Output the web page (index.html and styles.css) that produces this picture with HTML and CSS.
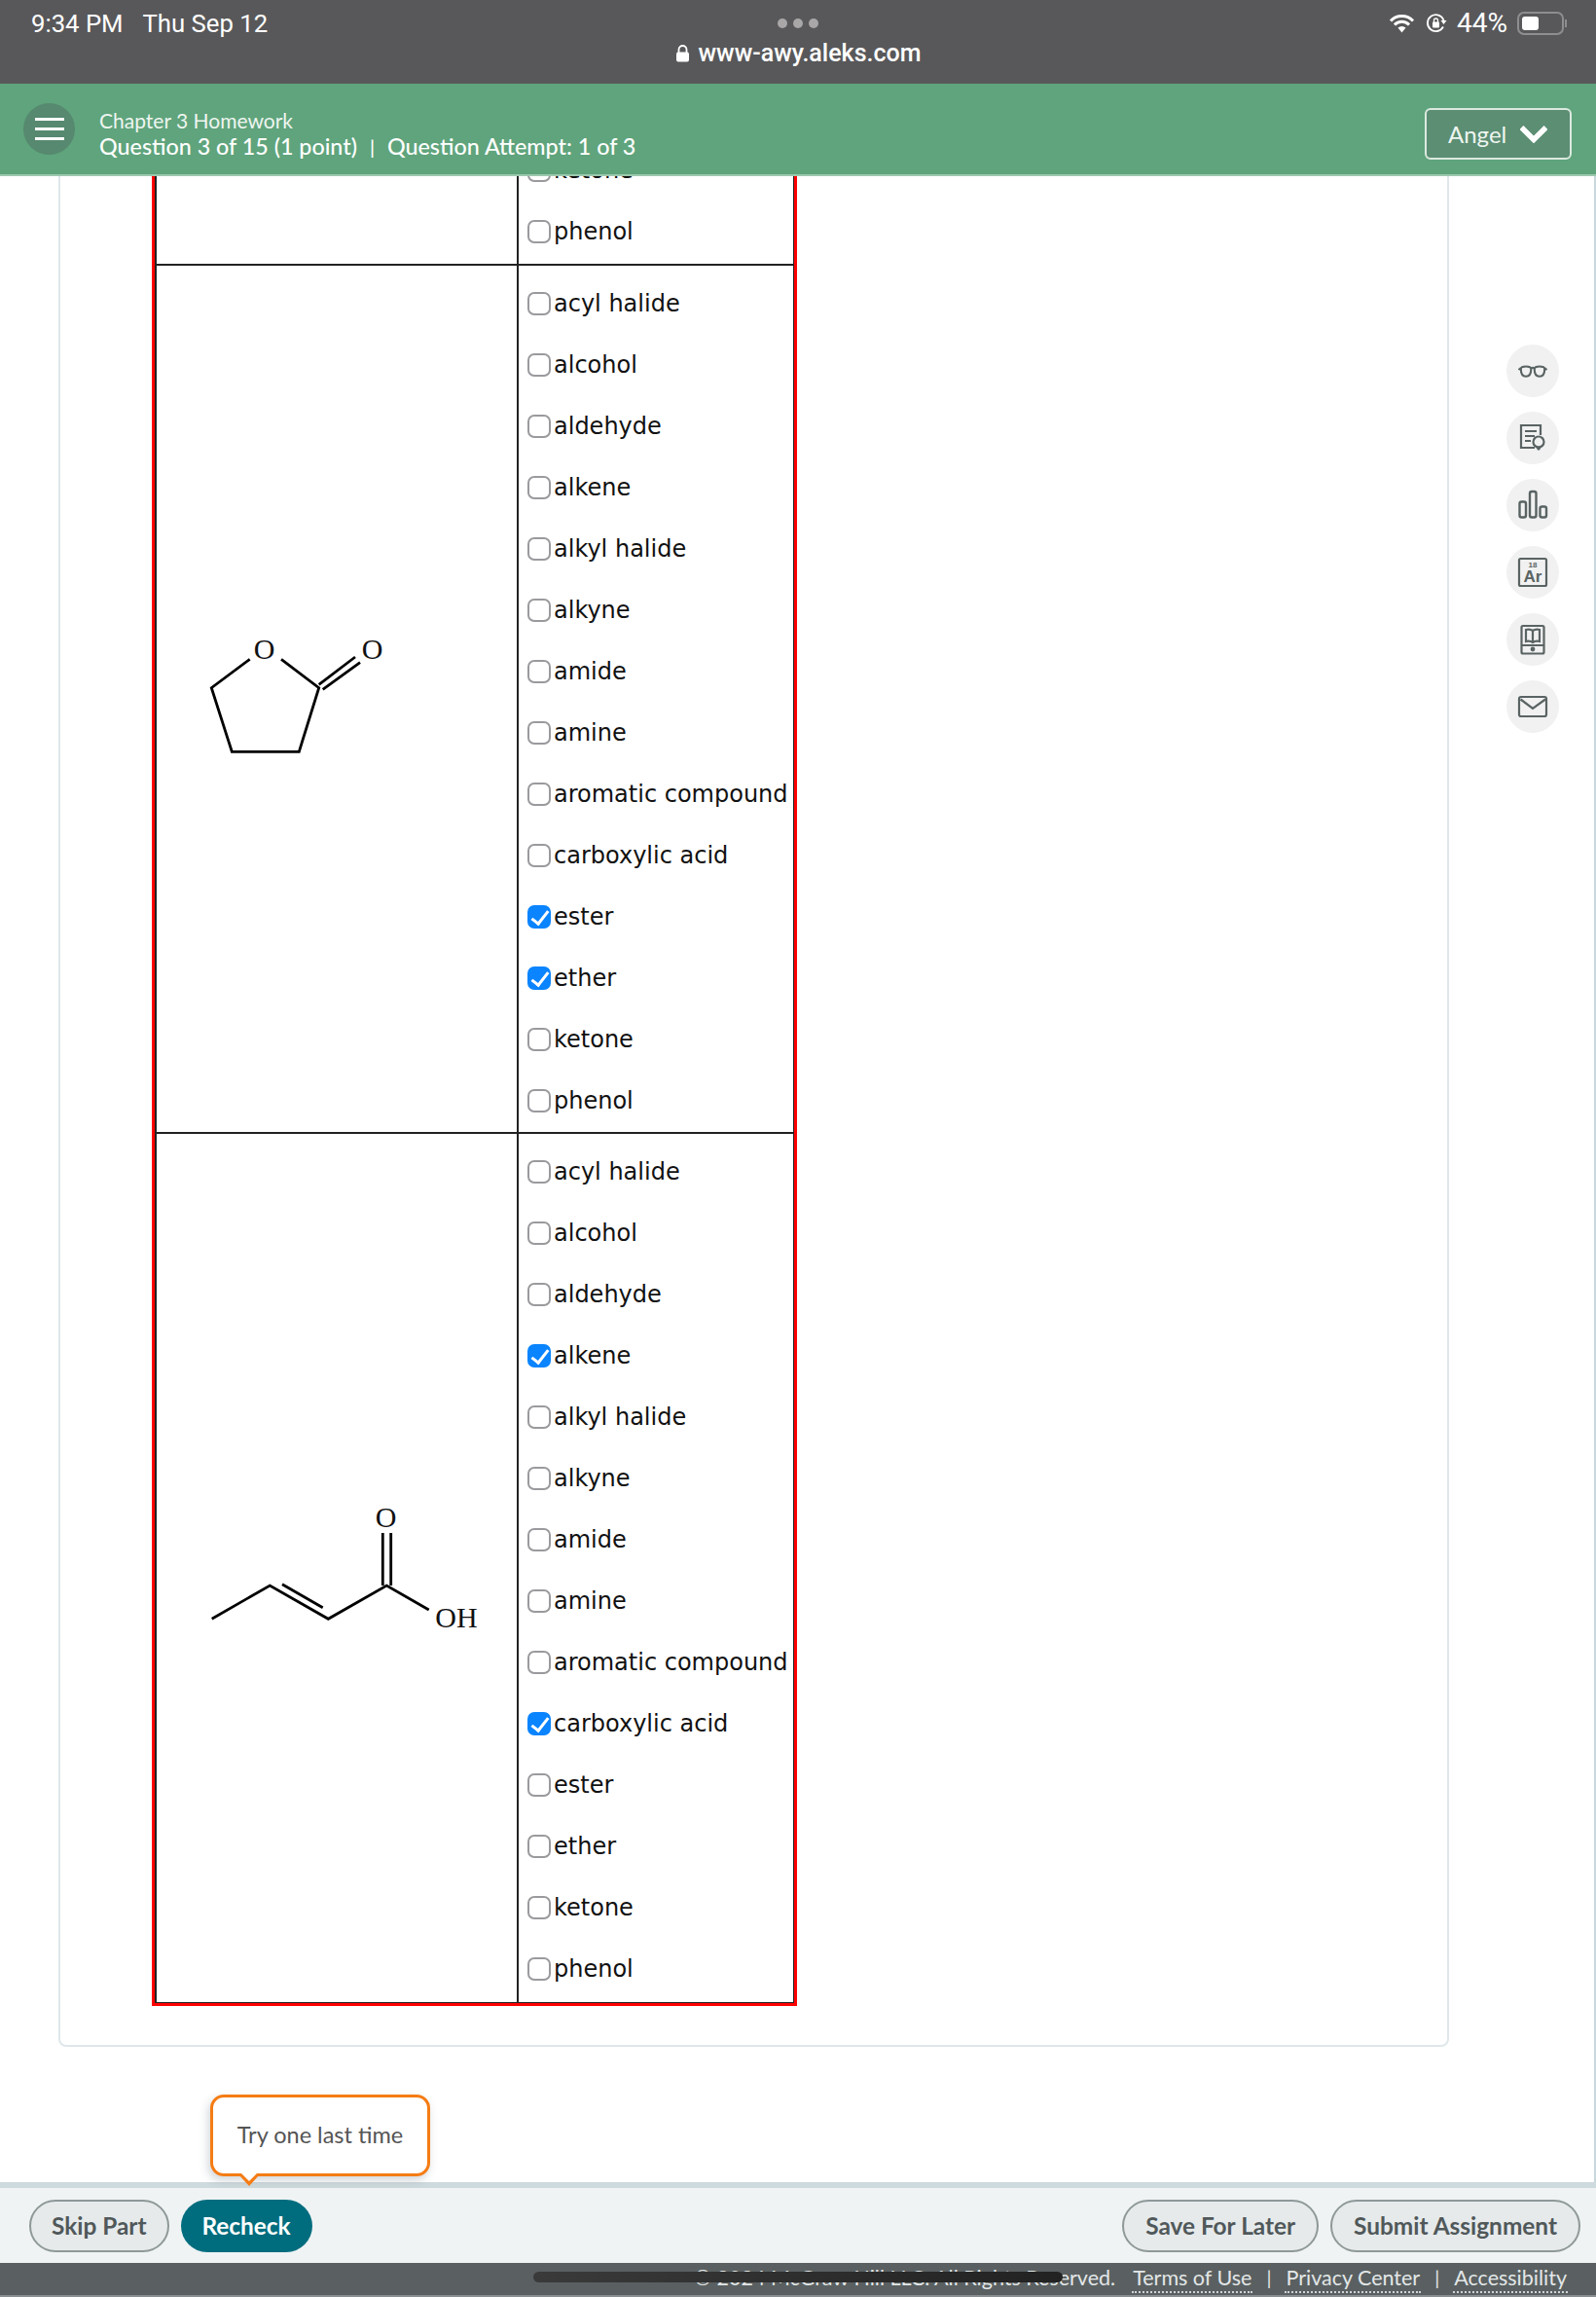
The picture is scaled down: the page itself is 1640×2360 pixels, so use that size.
FILE: index.html
```html
<!DOCTYPE html>
<html lang="en">
<head>
  <meta charset="UTF-8">
  <title>Chapter 3 Homework</title>
  <link rel="stylesheet" href="styles.css">
</head>
<body>
  <!-- Browser status bar -->
  <div class="status-bar">
    <div class="status-left"><span>9:34 PM</span><span>Thu Sep 12</span></div>
    <div class="status-center">
      <div class="dots"><i></i><i></i><i></i></div>
      <div class="url">
        <svg width="15" height="18" viewBox="0 0 15 18"><path d="M3.5 8V5a4 4 0 0 1 8 0v3" fill="none" stroke="#fff" stroke-width="1.8"/><rect x="1" y="7.500" width="13" height="10" rx="2" fill="#fff"/></svg>
        <span>www-awy.aleks.com</span>
      </div>
    </div>
    <div class="status-right">
      <svg width="27" height="21" viewBox="0 0 27 21"><path d="M2 8.500a16 16 0 0 1 23 0M6 12.500a10.500 10.500 0 0 1 15 0" fill="none" stroke="#fff" stroke-width="3"/><path d="M9.500 15.500a6 6 0 0 1 8 0L13.500 20.500z" fill="#fff"/></svg>
      <svg class="rot-lock" width="22" height="22" viewBox="0 0 22 22"><path d="M18 14.500A8.500 8.500 0 1 1 18.500 8" fill="none" stroke="#fff" stroke-width="1.800"/><path d="M15.500 8h6l-3 4z" fill="#fff"/><rect x="7" y="9.500" width="7" height="6" rx="1" fill="#fff"/><path d="M8.500 10V8a2 2 0 0 1 4 0v2" fill="none" stroke="#fff" stroke-width="1.300"/></svg>
      <span class="battery-text">44%</span>
      <div class="battery"><div class="battery-fill"></div></div>
      <div class="battery-nub"></div>
    </div>
  </div>

  <!-- Assignment header -->
  <header class="top-bar">
    <div class="menu-btn"><i></i><i></i><i></i></div>
    <div class="titles">
      <div class="chapter">Chapter 3 Homework</div>
      <div class="question">Question 3 of 15 (1 point)<span class="sep">|</span>Question Attempt: 1 of 3</div>
    </div>
    <div class="user-btn">
      <span>Angel</span>
      <svg width="28" height="18" viewBox="0 0 28 18"><path d="M1.500 2L14 14.500 26.500 2" fill="none" stroke="#fff" stroke-width="5.500"/></svg>
    </div>
  </header>

  <main class="main">
    <div class="card">
      <div class="answers">
        <div class="answers-inner">
          <div class="q-row">
            <div class="q-molecule"></div>
            <div class="q-options">
              <label class="option"><input type="checkbox">ketone</label>
              <label class="option"><input type="checkbox">phenol</label>
            </div>
          </div>

          <div class="q-row">
            <div class="q-molecule">
              <svg class="mol" width="200" height="142" viewBox="0 -6 200 142">
                <path d="M51.700 24.300L12.300 53.700 33.300 119.300H102.300L122.700 53.700 84 24.300M122.700 50.300L160 22M126.700 55.300L165 27.700" fill="none" stroke="#000" stroke-width="2.800"/>
                <text x="66.700" y="23.500" class="atom">O</text>
                <text x="177.700" y="23.500" class="atom">O</text>
              </svg>
            </div>
            <div class="q-options">
              <label class="option"><input type="checkbox">acyl halide</label>
              <label class="option"><input type="checkbox">alcohol</label>
              <label class="option"><input type="checkbox">aldehyde</label>
              <label class="option"><input type="checkbox">alkene</label>
              <label class="option"><input type="checkbox">alkyl halide</label>
              <label class="option"><input type="checkbox">alkyne</label>
              <label class="option"><input type="checkbox">amide</label>
              <label class="option"><input type="checkbox">amine</label>
              <label class="option"><input type="checkbox">aromatic compound</label>
              <label class="option"><input type="checkbox">carboxylic acid</label>
              <label class="option"><input type="checkbox" checked>ester</label>
              <label class="option"><input type="checkbox" checked>ether</label>
              <label class="option"><input type="checkbox">ketone</label>
              <label class="option"><input type="checkbox">phenol</label>
            </div>
          </div>

          <div class="q-row">
            <div class="q-molecule">
              <svg class="mol" width="300" height="142" viewBox="0 -6 300 142">
                <path d="M12.700 117.300L72.300 83 132.300 117.300 192.300 83 235.700 108M85 81.700L126.700 105.700M188.300 83V29M196.700 83V29" fill="none" stroke="#000" stroke-width="2.800"/>
                <text x="191.700" y="23" class="atom">O</text>
                <text x="264" y="126" class="atom">OH</text>
              </svg>
            </div>
            <div class="q-options">
              <label class="option"><input type="checkbox">acyl halide</label>
              <label class="option"><input type="checkbox">alcohol</label>
              <label class="option"><input type="checkbox">aldehyde</label>
              <label class="option"><input type="checkbox" checked>alkene</label>
              <label class="option"><input type="checkbox">alkyl halide</label>
              <label class="option"><input type="checkbox">alkyne</label>
              <label class="option"><input type="checkbox">amide</label>
              <label class="option"><input type="checkbox">amine</label>
              <label class="option"><input type="checkbox">aromatic compound</label>
              <label class="option"><input type="checkbox" checked>carboxylic acid</label>
              <label class="option"><input type="checkbox">ester</label>
              <label class="option"><input type="checkbox">ether</label>
              <label class="option"><input type="checkbox">ketone</label>
              <label class="option"><input type="checkbox">phenol</label>
            </div>
          </div>
        </div>
      </div>
    </div>

    <!-- Side tools -->
    <aside class="tools">
      <div class="tool">
        <svg width="54" height="54" viewBox="0 0 54 54"><g fill="none" stroke="#5a6363" stroke-width="2.100"><path d="M14.800 25Q15 22.500 20 22.500T25.300 25C25.300 30 23.500 32.700 20 32.700S14.800 30 14.800 25zM28.700 25Q29 22.500 34 22.500T39.200 25C39.200 30 37.500 32.700 34 32.700S28.700 30 28.700 25z"/><path d="M25.300 24.500Q27 23 28.700 24.500M14.800 24L12.500 26M39.200 24L41.500 26"/></g></svg>
      </div>
      <div class="tool">
        <svg width="54" height="54" viewBox="0 0 54 54"><g fill="none" stroke="#5a6363" stroke-width="2.200"><path d="M29 37H15V14H35V24"/><path d="M19 20H31M19 25H29M19 30H25"/><circle cx="33" cy="31" r="5.500"/></g><path d="M30 35.500h6l-2 4h-2z" fill="#5a6363"/></svg>
      </div>
      <div class="tool">
        <svg width="54" height="54" viewBox="0 0 54 54"><g fill="none" stroke="#5a6363" stroke-width="2.400"><rect x="13.500" y="23.500" width="6.500" height="16" rx="2"/><rect x="24" y="13" width="6.500" height="26.500" rx="2"/><rect x="34.500" y="28.500" width="6.500" height="11" rx="2"/></g></svg>
      </div>
      <div class="tool">
        <svg width="54" height="54" viewBox="0 0 54 54"><rect x="13" y="13" width="28" height="28" rx="1.500" fill="none" stroke="#5a6363" stroke-width="2.200"/><text x="27" y="22" class="el-num">18</text><text x="27" y="37" class="el-sym">Ar</text></svg>
      </div>
      <div class="tool">
        <svg width="54" height="54" viewBox="0 0 54 54"><g fill="none" stroke="#5a6363" stroke-width="2.200"><rect x="15.500" y="13" width="23" height="28.500" rx="1.500"/><path d="M15.500 33H38.500M27 18q-3-2-7-1V29q4-1 7 1q3-2 7-1V17q-4-1-7 1zM27 18V30"/><circle cx="27" cy="37" r="1.300"/></g></svg>
      </div>
      <div class="tool">
        <svg width="54" height="54" viewBox="0 0 54 54"><g fill="none" stroke="#5a6363" stroke-width="2.200"><rect x="13" y="17" width="28" height="20" rx="2"/><path d="M14.500 19.500L27 29 40 19.500"/></g></svg>
      </div>
    </aside>
  </main>

  <div class="tooltip">Try one last time</div>

  <!-- Action buttons -->
  <div class="actions">
    <button class="pill skip">Skip Part</button>
    <button class="pill recheck">Recheck</button>
    <div class="spacer"></div>
    <button class="pill save">Save For Later</button>
    <button class="pill submit">Submit Assignment</button>
  </div>

  <footer class="legal">
    <span class="copy">© 2024 McGraw Hill LLC. All Rights Reserved.</span>
    <a class="legal-link">Terms of Use</a>
    <span class="bar">|</span>
    <a class="legal-link">Privacy Center</a>
    <span class="bar">|</span>
    <a class="legal-link">Accessibility</a>
  </footer>
  <div class="home-pill"></div>
</body>
</html>
```
FILE: styles.css
```css
* {
  box-sizing: border-box;
}

html, body {
  margin: 0;
  height: 2360px;
  overflow: hidden;
}

body {
  position: relative;
  display: flex;
  flex-direction: column;
  font-family: Lato, "Open Sans", sans-serif;
  background: #fff;
}

/* status bar */
.status-bar {
  height: 86px;
  flex: none;
  display: grid;
  grid-template-columns: 1fr auto 1fr;
  background: #58585a;
  color: #fff;
  font-family: Roboto, sans-serif;
  font-size: 25.7px;
}

.status-left {
  display: flex;
  gap: 20px;
  padding: 9px 0 0 32px;
  height: 40px;
}

.status-center {
  display: flex;
  flex-direction: column;
  align-items: center;
  padding-top: 19px;
}

.dots {
  display: flex;
  gap: 6px;
}

.dots i {
  width: 10px;
  height: 10px;
  border-radius: 50%;
  background: #a9a7a7;
}

.url {
  display: flex;
  align-items: center;
  gap: 9px;
  margin-top: 11px;
  font-weight: 500;
  font-size: 25px;
}

.status-right {
  display: flex;
  justify-content: flex-end;
  align-items: flex-start;
  padding: 9px 30px 0 0;
  height: 40px;
}

.status-right svg {
  margin-top: 4px;
}

.rot-lock {
  margin-left: 11px;
}

.battery-text {
  margin-left: 10px;
  font-size: 28px;
  line-height: 30px;
}

.battery {
  width: 48px;
  height: 24px;
  margin: 3px 0 0 10px;
  padding: 3px;
  border: 2px solid #8e8e90;
  border-radius: 7px;
}

.battery-fill {
  width: 17px;
  height: 100%;
  background: #fff;
  border-radius: 3px;
}

.battery-nub {
  width: 2px;
  height: 8px;
  margin: 11px 0 0 1px;
  background: #8e8e90;
}

/* green header */
.top-bar {
  height: 95px;
  flex: none;
  display: flex;
  align-items: center;
  padding: 0 25px 0 24px;
  background: #5fa47c;
  border-bottom: 2px solid #9cc8ad;
  color: #fff;
  position: relative;
  z-index: 2;
}

.menu-btn {
  width: 53px;
  height: 53px;
  border-radius: 50%;
  background: #56896f;
  display: flex;
  flex-direction: column;
  justify-content: center;
  align-items: center;
  gap: 7px;
}

.menu-btn i {
  width: 30px;
  height: 3px;
  background: #fff;
}

.titles {
  margin: 11px 0 0 25px;
  flex: 1;
}

.chapter {
  font-size: 21px;
  line-height: 25px;
  color: #eef5f0;
}

.question {
  font-size: 23.3px;
  line-height: 29px;
  font-weight: 500;
}

.sep {
  margin: 0 13px;
  font-size: 20px;
}

.user-btn {
  width: 151px;
  height: 53px;
  margin-top: 10px;
  display: flex;
  align-items: center;
  gap: 14px;
  padding-left: 22px;
  background: #5b8e73;
  border: 2px solid #dbe9df;
  border-radius: 6px;
  font-size: 24px;
  color: #eef5f0;
}

/* scrolled content */
.main {
  flex: 1;
  min-height: 0;
  display: flex;
  align-items: flex-start;
  overflow: hidden;
  border-right: 2px solid #c9d6dc;
}

.card {
  width: 1429px;
  margin: -60px 0 0 60px;
  padding: 13px 0 40px 94px;
  border: 2px solid #dfe7ea;
  border-radius: 8px;
  flex: none;
}

.answers {
  width: 663px;
  border: 3px solid #f00;
  font-family: "DejaVu Sans", sans-serif;
  font-size: 24px;
  color: #111;
}

.answers-inner {
  border: 2px solid #222;
  border-right-width: 1px;
  border-bottom-width: 1px;
}

.q-row {
  display: flex;
  border-bottom: 2px solid #222;
}

.q-row:last-child {
  border-bottom: none;
}

.q-molecule {
  width: 370px;
  flex: none;
  display: flex;
  align-items: center;
  padding-left: 44px;
}

.q-options {
  flex: 1;
  padding: 3px 0 1px 9px;
  border-left: 2px solid #222;
}

.q-row + .q-row .q-options {
  padding: 8px 0 1px 9px;
}

.q-row + .q-row + .q-row .q-options {
  padding: 8px 0 3px 9px;
}

.option {
  height: 62.95px;
  display: flex;
  align-items: center;
  gap: 3px;
}

.option input {
  appearance: none;
  width: 24px;
  height: 24px;
  margin: 0;
  flex: none;
  position: relative;
  border: 2px solid #9a9a9e;
  border-radius: 7px;
  background: #fff;
}

.option input:checked {
  background: #0a84ff;
  border-color: #0a84ff;
}

.option input:checked::after {
  content: "";
  position: absolute;
  left: 6px;
  top: 0;
  width: 7px;
  height: 15px;
  border: solid #fff;
  border-width: 0 3px 3px 0;
  transform: rotate(38deg);
}

.atom {
  font-family: "Liberation Serif", serif;
  font-size: 30px;
  text-anchor: middle;
  fill: #111;
}

/* side tools */
.tools {
  margin: 173px 0 0 59px;
  display: flex;
  flex-direction: column;
  gap: 15px;
}

.tool {
  width: 54px;
  height: 54px;
  border-radius: 50%;
  background: #f1f1f1;
}

.tool svg {
  display: block;
}

.el-num {
  font-family: "Liberation Sans", sans-serif;
  font-size: 8px;
  font-weight: bold;
  text-anchor: middle;
  fill: #5a6363;
}

.el-sym {
  font-family: "Liberation Sans", sans-serif;
  font-size: 17px;
  font-weight: bold;
  text-anchor: middle;
  fill: #5a6363;
}

/* tooltip over the button bar */
.tooltip {
  position: absolute;
  left: 216px;
  top: 2152px;
  width: 226px;
  height: 84px;
  z-index: 3;
  display: flex;
  align-items: center;
  justify-content: center;
  padding-bottom: 2px;
  background: #fff;
  border: 3px solid #f57c14;
  border-radius: 14px;
  box-shadow: -2px 4px 10px rgba(70, 90, 100, 0.25);
  font-size: 23.5px;
  color: #555;
}

.tooltip::before {
  content: "";
  position: absolute;
  left: 26px;
  bottom: -13px;
  border-style: solid;
  border-width: 12px 11px 0;
  border-color: #f57c14 transparent transparent;
}

.tooltip::after {
  content: "";
  position: absolute;
  left: 29px;
  bottom: -8px;
  border-style: solid;
  border-width: 8px 8px 0;
  border-color: #fff transparent transparent;
}

/* buttons */
.actions {
  height: 83px;
  flex: none;
  display: flex;
  align-items: center;
  gap: 12px;
  padding: 0 16px 0 30px;
  background: #eff3f4;
  border-top: 6px solid #cfdade;
}

.spacer {
  flex: 1;
}

.pill {
  height: 54px;
  padding: 0 22px;
  border: 2px solid #8f9898;
  border-radius: 27px;
  background: #e6eaeb;
  font-family: Lato, sans-serif;
  font-size: 24.4px;
  font-weight: 700;
  color: #50585a;
}

.skip {
  padding: 0 21px;
}

.recheck {
  width: 135px;
  padding: 0;
  border: none;
  background: #006d7e;
  color: #fff;
}

/* legal footer */
.legal {
  height: 35px;
  flex: none;
  display: flex;
  align-items: flex-start;
  justify-content: flex-end;
  padding: 0 29px 0 0;
  background: #5a6061;
  border-bottom: 2px solid #8a9091;
  font-size: 21.5px;
  line-height: 31px;
  color: #e3e7e8;
}

.copy {
  margin-right: 17px;
}

.legal-link {
  padding: 0 1px 0;
  height: 31px;
  border-bottom: 2px dotted #cfd5d6;
}

.bar {
  margin: 0 14px;
  font-size: 20px;
}

.home-pill {
  position: absolute;
  left: 548px;
  top: 2334px;
  width: 544px;
  height: 11px;
  border-radius: 6px;
  background: linear-gradient(90deg, #3a3a3a, #222);
}
```
